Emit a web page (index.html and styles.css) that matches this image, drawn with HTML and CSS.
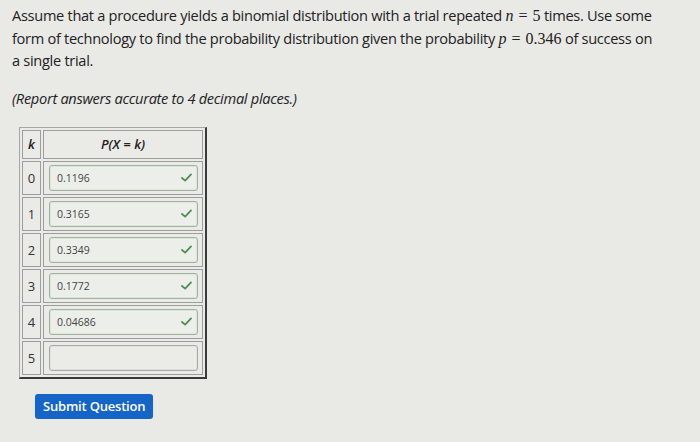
FILE: index.html
```html
<!DOCTYPE html>
<html>
<head>
<meta charset="utf-8">
<link rel="stylesheet" href="styles.css">
</head>
<body>
<div class="page">
  <p class="question">Assume that a procedure yields a binomial distribution with a trial repeated <span class="math"><i>n</i><span class="eq">=</span>5</span> times. Use some form of technology to find the probability distribution given the probability <span class="math"><i>p</i><span class="eq">=</span>0.346</span> of success on a single trial.</p>
  <p class="note">(Report answers accurate to 4 decimal places.)</p>
  <table class="dist">
    <tr class="head"><th class="kcol">k</th><th class="pcol">P(X = k)</th></tr>
    <tr><td class="kcell">0</td><td class="pcell"><div class="field ok"><span>0.1196</span><svg class="check" viewBox="0 0 12 10"><path d="M1 5.5 L4.5 8.5 L11 1.5"/></svg></div></td></tr>
    <tr><td class="kcell">1</td><td class="pcell"><div class="field ok"><span>0.3165</span><svg class="check" viewBox="0 0 12 10"><path d="M1 5.5 L4.5 8.5 L11 1.5"/></svg></div></td></tr>
    <tr><td class="kcell">2</td><td class="pcell"><div class="field ok"><span>0.3349</span><svg class="check" viewBox="0 0 12 10"><path d="M1 5.5 L4.5 8.5 L11 1.5"/></svg></div></td></tr>
    <tr><td class="kcell">3</td><td class="pcell"><div class="field ok"><span>0.1772</span><svg class="check" viewBox="0 0 12 10"><path d="M1 5.5 L4.5 8.5 L11 1.5"/></svg></div></td></tr>
    <tr><td class="kcell">4</td><td class="pcell"><div class="field ok"><span>0.04686</span><svg class="check" viewBox="0 0 12 10"><path d="M1 5.5 L4.5 8.5 L11 1.5"/></svg></div></td></tr>
    <tr><td class="kcell">5</td><td class="pcell"><div class="field empty"></div></td></tr>
  </table>
  <button class="submit">Submit Question</button>
</div>
</body>
</html>
```
FILE: styles.css
```css
html, body {
  margin: 0;
  padding: 0;
  background: #e9e9e6;
}
.page {
  padding: 4px 12px 0 12px;
  font-family: "Open Sans", "Liberation Sans", sans-serif;
  color: #222;
}
.question {
  margin: 0;
  font-size: 14.6px;
  line-height: 22.5px;
  letter-spacing: -0.3px;
  width: 642px;
}
.math {
  font-family: "Liberation Serif", serif;
  font-size: 16px;
  line-height: 1;
  letter-spacing: 0;
}
.eq {
  margin: 0 5px;
}
.note {
  margin: 15px 0 0 0;
  font-size: 14.6px;
  font-style: italic;
  letter-spacing: -0.3px;
  line-height: 22px;
}
.dist {
  margin: 18px 0 0 7px;
  border-collapse: separate;
  border-spacing: 2px;
  border-top: 1px solid #a7a7a5;
  border-left: 1px solid #a7a7a5;
  border-right: 2px solid #3a3a3a;
  border-bottom: 2px solid #3a3a3a;
  background: #eaeae7;
}
.dist th, .dist td {
  border: 1px solid #9d9d9b;
  padding: 0;
  font-size: 13px;
}
.head th {
  height: 27px;
  font-style: italic;
  font-weight: 600;
  color: #222;
}
.kcol {
  width: 17px;
}
.pcol {
  width: 158px;
}
.kcell {
  height: 32px;
  text-align: center;
  font-size: 13px;
  color: #333;
}
.pcell {
  padding: 0 4px 0 5px !important;
}
.field {
  height: 24px;
  border: 1px solid #a2b0a0;
  border-radius: 3px;
  background: #ecefe9;
  display: flex;
  align-items: center;
  justify-content: space-between;
  padding: 0 5px 0 7px;
  font-size: 10.5px;
  color: #444;
  box-shadow: inset 0 0 0 1px #dfe6dc;
}
.field.empty {
  border-color: #a9a9a7;
  background: #ebebe8;
  box-shadow: inset 0 0 0 1px #e0e0dd;
}
.check {
  width: 11px;
  height: 9px;
  fill: none;
  stroke: #4f8f55;
  stroke-width: 2;
  stroke-linecap: round;
  stroke-linejoin: round;
}
.submit {
  display: block;
  margin: 15px 0 0 23px;
  background: #1565c8;
  color: #fff;
  border: none;
  border-radius: 3px;
  font-family: "Open Sans", "Liberation Sans", sans-serif;
  font-weight: 600;
  font-size: 13px;
  padding: 3px 8px 4px 8px;
  letter-spacing: -0.2px;
}
```
